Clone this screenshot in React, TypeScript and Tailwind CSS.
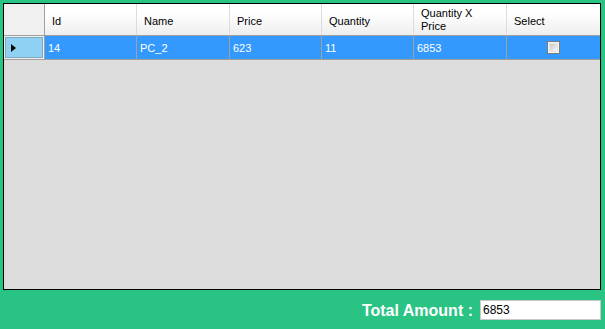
import React from "react"

const COLS = [
  { key: "id", label: "Id", w: "w-[92px]" },
  { key: "name", label: "Name", w: "w-[93px]" },
  { key: "price", label: "Price", w: "w-[92px]" },
  { key: "qty", label: "Quantity", w: "w-[92px]" },
  { key: "total", label: "Quantity X Price", w: "w-[93px]" },
]

const ROW = { id: "14", name: "PC_2", price: "623", qty: "11", total: "6853" }

export default function App() {
  return (
    <div className="w-[605px] h-[329px] bg-[#29c383] pt-[3px] pl-[3px] font-['Liberation_Sans',Arial,sans-serif] text-[11px] overflow-hidden">
      {/* grid */}
      <div className="w-[598px] h-[287px] border border-black bg-[#dcdcdc] flex flex-col">
        {/* header */}
        <div className="flex h-[32px] border-b border-[#a0a0a0]">
          <div className="w-[41px] border-r border-[#a0a0a0] bg-[#f0f0f0]" />
          {COLS.map((c) => (
            <div
              key={c.key}
              className={`${c.w} border-r border-[#dcdcdc] bg-gradient-to-b from-white from-30% to-[#eeeeee] flex items-center pl-[7px] text-black leading-[13px]`}
            >
              {c.key === "total" ? (
                <span className="pt-[1px]">Quantity X<br />Price</span>
              ) : (
                <span className="pt-[4px]">{c.label}</span>
              )}
            </div>
          ))}
          <div className="w-[93px] bg-gradient-to-b from-white from-30% to-[#eeeeee] flex items-center pl-[7px] text-black">
            <span className="pt-[4px]">Select</span>
          </div>
        </div>

        {/* selected row */}
        <div className="flex h-[24px] border-b border-[#a0a0a0]">
          <div className="w-[41px] border-r border-[#a0a0a0] bg-[#f0f0f0] p-px">
            <div className="h-full border border-[#7fa9bf] bg-[#8fd1f3] flex items-center pl-[5px]">
              <div className="w-0 h-0 border-y-[4px] border-y-transparent border-l-[5px] border-l-black" />
            </div>
          </div>
          {COLS.map((c) => (
            <div
              key={c.key}
              className={`${c.w} border-r border-[#a0a0a0] bg-[#3399ff] flex items-center pl-[3px] pt-px text-white`}
            >
              {ROW[c.key as keyof typeof ROW]}
            </div>
          ))}
          <div className="w-[93px] bg-[#3399ff] flex items-center justify-center">
            <div className="w-[13px] h-[13px] border border-[#7a7a7a] bg-[#f4f4f4] p-px">
              <div className="w-full h-full border border-[#e6e6e6] bg-gradient-to-br from-[#c8c8c8] to-[#f8f8f8]" />
            </div>
          </div>
        </div>
      </div>

      {/* footer */}
      <div className="flex items-center justify-end h-[39px] pr-[4px] gap-[7px]">
        <span className="text-white font-bold text-[16px] pt-[3px]">Total Amount :</span>
        <div className="w-[121px] h-[20px] bg-white border border-[#c8c8c8] flex items-center pl-[2px] text-[12px] text-black">
          6853
        </div>
      </div>
    </div>
  )
}
